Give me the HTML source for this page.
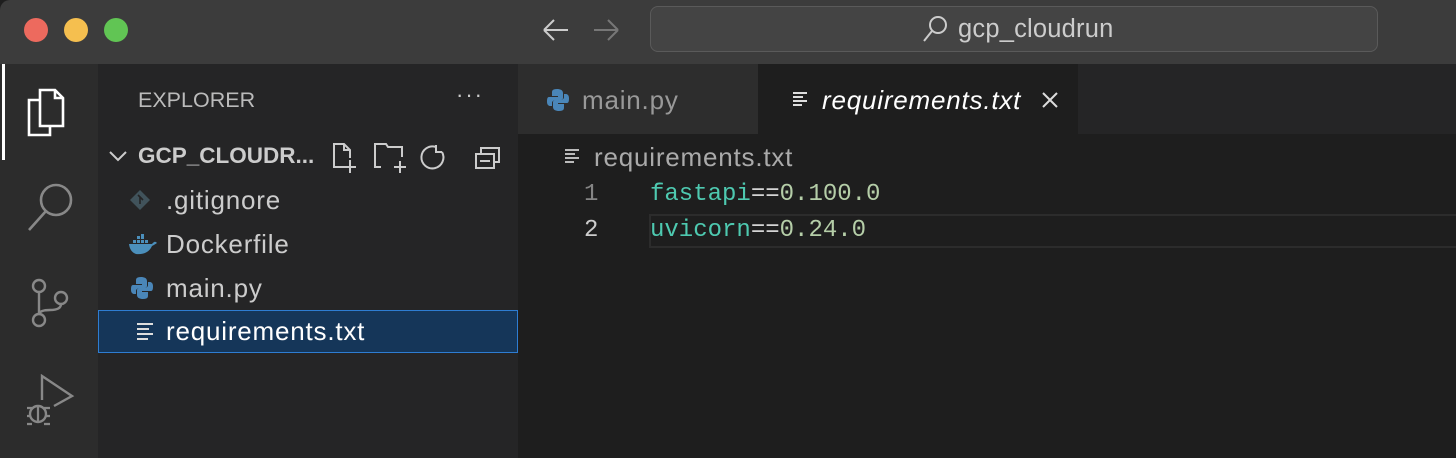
<!DOCTYPE html>
<html><head><style>
body{margin:0;width:1456px;height:458px;overflow:hidden;background:#1e1e1e;font-family:"Liberation Sans",sans-serif;position:relative}
.a{position:absolute}
.t{color:#ccc;font-size:26px;white-space:nowrap;line-height:30px;letter-spacing:0.8px}
.m{font-family:'Liberation Mono',monospace;font-size:24px;white-space:pre;line-height:30px}
</style></head><body>
<div class="a" style="left:0;top:0;width:1456px;height:64px;background:#3c3c3c;border-radius:10px 0 0 0"></div>
<div class="a" style="left:24px;top:18px;width:24px;height:24px;border-radius:50%;background:#ed6a5e"></div>
<div class="a" style="left:64px;top:18px;width:24px;height:24px;border-radius:50%;background:#f5bf4f"></div>
<div class="a" style="left:104px;top:18px;width:24px;height:24px;border-radius:50%;background:#61c554"></div>
<svg class="a" style="left:540px;top:16px" width="80" height="30"><path d="M4 14H28M4 14L14 4M4 14L14 24" stroke="#ccc" stroke-width="2" fill="none"/><path d="M54 14H78M78 14L68 4M78 14L68 24" stroke="#777" stroke-width="2" fill="none"/></svg>
<div class="a" style="left:650px;top:6px;width:726px;height:44px;border:1px solid #5a5a5a;border-radius:8px;background:#444"></div>
<svg class="a" style="left:920px;top:14px" width="30" height="30"><circle cx="18" cy="11" r="8" stroke="#ccc" stroke-width="2" fill="none"/><path d="M12 17L4 27" stroke="#ccc" stroke-width="2"/></svg>
<div class="a t" style="left:958px;top:14px;font-size:25.5px;letter-spacing:0.2px">gcp_cloudrun</div>

<div class="a" style="left:0;top:64px;width:98px;height:394px;background:#2c2c2c"></div>
<div class="a" style="left:2px;top:64px;width:3px;height:96px;background:#fff"></div>
<svg class="a" style="left:26px;top:86px" width="46" height="52"><path d="M14 4H29L37 12V40H14Z M29 4V12H37 M14 14H3V49H24V40" stroke="#fff" stroke-width="2.6" fill="none"/></svg>
<svg class="a" style="left:26px;top:180px" width="50" height="56"><circle cx="30" cy="20" r="15" stroke="#888" stroke-width="2.6" fill="none"/><path d="M20 31L3 50" stroke="#888" stroke-width="2.6"/></svg>
<svg class="a" style="left:28px;top:278px" width="44" height="52"><circle cx="11" cy="8" r="6" stroke="#888" stroke-width="2.4" fill="none"/><circle cx="11" cy="42" r="6" stroke="#888" stroke-width="2.4" fill="none"/><circle cx="33" cy="20" r="6" stroke="#888" stroke-width="2.4" fill="none"/><path d="M11 14V36M33 26Q33 32 22 32Q12 32 11 36" stroke="#888" stroke-width="2.4" fill="none"/></svg>
<svg class="a" style="left:24px;top:374px" width="54" height="52"><path d="M18 26V2L48 22L30 32" stroke="#888" stroke-width="2.4" fill="none"/><circle cx="14" cy="40" r="8" stroke="#888" stroke-width="2.4" fill="none"/><path d="M3 34H8M3 42H6M3 50H8M20 34H26M22 42H26M20 50H26M14 32V48" stroke="#888" stroke-width="2.2"/></svg>

<div class="a" style="left:98px;top:64px;width:420px;height:394px;background:#252526"></div>
<div class="a t" style="left:138px;top:85px;font-size:21.5px;color:#bbb;letter-spacing:0">EXPLORER</div>
<div class="a t" style="left:456px;top:80px;font-size:22px;letter-spacing:2px;color:#ccc">···</div>
<svg class="a" style="left:106px;top:146px" width="26" height="20"><path d="M4 6L12 14L20 6" stroke="#ccc" stroke-width="2" fill="none"/></svg>
<div class="a t" style="left:138px;top:141px;font-weight:bold;font-size:22.5px;letter-spacing:0">GCP_CLOUDR...</div>
<svg class="a" style="left:330px;top:140px" width="180" height="36"><g stroke="#ccc" stroke-width="2" fill="none"><path d="M14 27H4V4H14L20 10V18M14 4V10H20M20 20V33M14 27H26"/><path d="M51 27H45V4H56L58 7H72V17M64 27H76M70 21V33"/><path d="M112 12A11 11 0 1 1 106 7M106 5V12H112" /><path d="M151 14V8H169V22H163M146 14H164V28H146ZM150 21H160"/></g></svg>
<svg class="a" style="left:128px;top:188px" width="24" height="24"><path d="M12 2L22 12L12 22L2 12Z" fill="#41535b"/><path d="M10 7L12 9V16M12 9L15 12" stroke="#252526" stroke-width="1.6" fill="none"/></svg>
<div class="a t" style="left:166px;top:185px">.gitignore</div>
<svg class="a" style="left:128px;top:234px" width="30" height="22"><path d="M1 10H24Q27 6 29 9Q26 11 24 12Q20 21 8 20Q2 18 1 10Z" fill="#4b8fbb"/><g fill="#4b8fbb"><rect x="5" y="6" width="3" height="3"/><rect x="9" y="6" width="3" height="3"/><rect x="13" y="6" width="3" height="3"/><rect x="9" y="2" width="3" height="3"/><rect x="13" y="2" width="3" height="3"/><rect x="17" y="6" width="3" height="3"/><rect x="13" y="-1" width="3" height="3"/></g></svg>
<div class="a t" style="left:166px;top:229px">Dockerfile</div>
<svg class="a" style="left:130px;top:276px" width="24" height="24"><path d="M11 1C6 1 6 3 6 5V8H12V9H3C1 9 1 12 1 14C1 17 3 18 4 18H6V15C6 13 8 12 10 12H15C16 12 17 11 17 10V5C17 2 14 1 11 1Z" fill="#4a86b8"/><path d="M13 23C18 23 18 21 18 19V16H12V15H21C23 15 23 12 23 10C23 7 21 6 20 6H18V9C18 11 16 12 14 12H9C8 12 7 13 7 14V19C7 22 10 23 13 23Z" fill="#4a86b8"/></svg>
<div class="a t" style="left:166px;top:273px">main.py</div>
<div class="a" style="left:98px;top:310px;width:418px;height:41px;background:#153659;border:1px solid #2e7dd2"></div>
<svg class="a" style="left:136px;top:322px" width="20" height="20"><path d="M1 2H17M1 7H13M1 12H17M1 17H12" stroke="#ddd" stroke-width="2"/></svg>
<div class="a t" style="left:166px;top:316px;color:#fff">requirements.txt</div>

<div class="a" style="left:518px;top:64px;width:938px;height:70px;background:#252526"></div>
<div class="a" style="left:518px;top:64px;width:240px;height:70px;background:#2d2d2d"></div>
<div class="a" style="left:758px;top:64px;width:320px;height:70px;background:#1e1e1e"></div>
<svg class="a" style="left:546px;top:88px" width="24" height="24"><path d="M11 1C6 1 6 3 6 5V8H12V9H3C1 9 1 12 1 14C1 17 3 18 4 18H6V15C6 13 8 12 10 12H15C16 12 17 11 17 10V5C17 2 14 1 11 1Z" fill="#4a86b8"/><path d="M13 23C18 23 18 21 18 19V16H12V15H21C23 15 23 12 23 10C23 7 21 6 20 6H18V9C18 11 16 12 14 12H9C8 12 7 13 7 14V19C7 22 10 23 13 23Z" fill="#4a86b8"/></svg>
<div class="a t" style="left:582px;top:85px;color:#999">main.py</div>
<svg class="a" style="left:792px;top:91px" width="18" height="18"><path d="M1 2H15M1 6H11M1 10H15M1 14H10" stroke="#ddd" stroke-width="2"/></svg>
<div class="a t" style="left:822px;top:85px;color:#fff;font-style:italic">requirements.txt</div>
<svg class="a" style="left:1040px;top:90px" width="20" height="20"><path d="M3 3L17 17M17 3L3 17" stroke="#ddd" stroke-width="2"/></svg>

<svg class="a" style="left:564px;top:148px" width="18" height="18"><path d="M1 2H15M1 6H11M1 10H15M1 14H10" stroke="#bbb" stroke-width="2"/></svg>
<div class="a t" style="left:594px;top:142px;color:#aaa">requirements.txt</div>
<div class="a" style="left:649px;top:214px;width:807px;height:34px;border:2px solid #2c2c2c;border-right:none;box-sizing:border-box"></div>
<div class="a m" style="left:584px;top:180px;color:#858585">1</div>
<div class="a m" style="left:584px;top:216px;color:#ccc">2</div>
<div class="a m" style="left:650px;top:180px"><span style="color:#4ec9b0">fastapi</span><span style="color:#d4d4d4">==</span><span style="color:#b5cea8">0.100.0</span></div>
<div class="a m" style="left:650px;top:216px"><span style="color:#4ec9b0">uvicorn</span><span style="color:#d4d4d4">==</span><span style="color:#b5cea8">0.24.0</span></div>
</body></html>
